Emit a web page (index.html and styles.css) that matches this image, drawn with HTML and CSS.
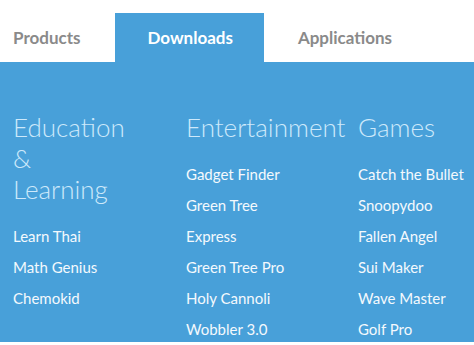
FILE: index.html
```html
<!DOCTYPE html>
<html lang="en">
<head>
    <meta charset="UTF-8">
    <meta name="viewport" content="width=device-width, initial-scale=1.0">
    <title>Mega Menu</title>
    <link rel="stylesheet" href="styles.css">
</head>
<body>
    <nav class="tabs">
        <a class="tab" href="#">Products</a>
        <a class="tab active" href="#">Downloads</a>
        <a class="tab" href="#">Applications</a>
    </nav>
    <div class="panel">
        <div class="col">
            <h2>Education &amp; Learning</h2>
            <ul>
                <li><a href="#">Learn Thai</a></li>
                <li><a href="#">Math Genius</a></li>
                <li><a href="#">Chemokid</a></li>
            </ul>
        </div>
        <div class="col">
            <h2>Entertainment</h2>
            <ul>
                <li><a href="#">Gadget Finder</a></li>
                <li><a href="#">Green Tree</a></li>
                <li><a href="#">Express</a></li>
                <li><a href="#">Green Tree Pro</a></li>
                <li><a href="#">Holy Cannoli</a></li>
                <li><a href="#">Wobbler 3.0</a></li>
            </ul>
        </div>
        <div class="col">
            <h2>Games</h2>
            <ul>
                <li><a href="#">Catch the Bullet</a></li>
                <li><a href="#">Snoopydoo</a></li>
                <li><a href="#">Fallen Angel</a></li>
                <li><a href="#">Sui Maker</a></li>
                <li><a href="#">Wave Master</a></li>
                <li><a href="#">Golf Pro</a></li>
            </ul>
        </div>
    </div>
</body>
</html>
```

FILE: styles.css
```css
body {
    font-family: Lato, "Open Sans", sans-serif;
    margin: 0;
    padding: 0;
    background: #fff;
    overflow: hidden;
}
.tabs {
    display: flex;
    padding-top: 13px;
}
.tab {
    display: block;
    height: 49px;
    line-height: 50px;
    padding: 0 31px 0 32px;
    font-size: 17px;
    font-weight: bold;
    color: #8a8a8a;
    text-decoration: none;
}
.tab:first-child {
    padding-left: 13px;
    padding-right: 35px;
}
.tab:last-child {
    padding-left: 34px;
}
.tab.active {
    background-color: #48a0d9;
    color: #fff;
}
.panel {
    display: grid;
    grid-template-columns: 173px 172px 1fr;
    height: 280px;
    padding: 0 0 0 13px;
    background-color: #48a0d9;
}
.col h2 {
    max-width: 115px;
    margin: 50px 0 0;
    font-size: 26px;
    font-weight: 300;
    line-height: 31px;
    color: #cde9fb;
}
.col ul {
    list-style: none;
    margin: 15px 0 0;
    padding: 0;
}
.col li {
    height: 31px;
    line-height: 31px;
}
.col a {
    font-size: 15px;
    color: #f4f9fd;
    text-decoration: none;
}
```
